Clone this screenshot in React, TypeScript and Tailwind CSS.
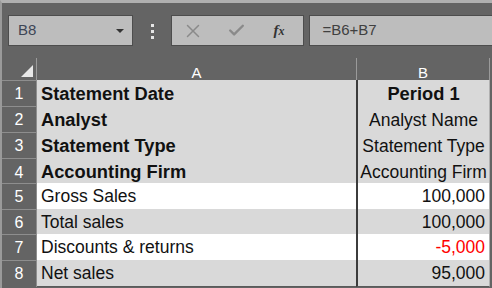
import { Check, X } from "lucide-react";

type Row = {
  n: number;
  a: string;
  b: string;
  h: string;
  aBold?: boolean;
  bBold?: boolean;
  center?: boolean;
  white?: boolean;
  red?: boolean;
  line?: boolean;
};

const ROWS: Row[] = [
  { n: 1, a: "Statement Date", b: "Period 1", h: "h-[26px]", aBold: true, bBold: true, center: true },
  { n: 2, a: "Analyst", b: "Analyst Name", h: "h-[26px]", aBold: true, center: true },
  { n: 3, a: "Statement Type", b: "Statement Type", h: "h-[26px]", aBold: true, center: true },
  { n: 4, a: "Accounting Firm", b: "Accounting Firm", h: "h-[25px]", aBold: true, center: true, line: true },
  { n: 5, a: "Gross Sales", b: "100,000", h: "h-[26px]", white: true, line: true },
  { n: 6, a: "Total sales", b: "100,000", h: "h-[25px]", line: true },
  { n: 7, a: "Discounts & returns", b: "-5,000", h: "h-[26px]", white: true, red: true, line: true },
  { n: 8, a: "Net sales", b: "95,000", h: "h-[25px]", line: true },
];

export default function App() {
  return (
    <div className="h-[288px] w-[492px] overflow-hidden border-l-2 border-t-[3px] border-l-[#9a9a9a] border-t-[#b0b0b0] bg-[#646464] font-['Liberation_Sans',Arial,sans-serif]">
      {/* Formula bar */}
      <div className="flex h-[55px] items-start pt-[12px]">
        <div className="ml-[6px] flex h-[31px] w-[125px] items-center justify-between border border-[#4d4d4d] bg-[#bdbdbd] pl-[9px] pr-[8px]">
          <span className="text-[15px] text-[#3d4656]">B8</span>
          <span className="h-0 w-0 border-x-[4px] border-t-[4px] border-x-transparent border-t-[#333]" />
        </div>
        <div className="ml-[18px] mt-[9px] flex flex-col gap-[3.5px]">
          <span className="h-[2.5px] w-[2.5px] bg-[#e6e6e6]" />
          <span className="h-[2.5px] w-[2.5px] bg-[#e6e6e6]" />
          <span className="h-[2.5px] w-[2.5px] bg-[#e6e6e6]" />
        </div>
        <div className="ml-[17px] flex h-[31px] w-[133px] items-center border border-[#4d4d4d] bg-[#bdbdbd]">
          <X className="ml-[10px] h-[22px] w-[22px] text-[#8a8a8a]" strokeWidth={1.6} />
          <Check className="ml-[23px] h-[19px] w-[19px] text-[#8a8a8a]" strokeWidth={3} />
          <span className="ml-[28px] font-['Liberation_Serif',serif] text-[15px] font-bold italic text-[#333]">
            f<span className="text-[12px]">x</span>
          </span>
        </div>
        <div className="ml-[5px] flex h-[31px] flex-1 items-center border border-r-0 border-[#4d4d4d] bg-[#bdbdbd] pl-[13px]">
          <span className="text-[15px] text-[#404040]">=B6+B7</span>
        </div>
      </div>

      {/* Column headers */}
      <div className="grid h-[22px] grid-cols-[35px_319px_134px] text-white">
        <div className="relative border-r border-[#9a9a9a]">
          <span className="absolute bottom-[3px] right-[3px] h-0 w-0 border-b-[12px] border-l-[12px] border-b-[#e8e8e8] border-l-transparent" />
        </div>
        <div className="flex items-end justify-center text-[15px] leading-none">A</div>
        <div className="flex items-end justify-center border-x border-[#9a9a9a] text-[15px] leading-none">B</div>
      </div>

      {/* Rows */}
      {ROWS.map((r) => (
        <div key={r.n} className={`grid grid-cols-[35px_319px_134px] ${r.h}`}>
          <div className="flex items-center justify-center border-r border-t border-[#8e8e8e] text-[16px] text-white">
            {r.n}
          </div>
          <div
            className={`flex items-center pl-[4px] text-[#111] ${r.white ? "bg-white" : "bg-[#d9d9d9]"} ${
              r.line ? "border-b border-[#5a5a5a]" : ""
            } ${r.aBold ? "text-[18.3px] font-bold" : "text-[17.5px]"}`}
          >
            {r.a}
          </div>
          <div
            className={`flex items-center border-l-2 border-r border-l-[#3c3c3c] border-r-[#b0b0b0] ${
              r.white ? "bg-white" : "bg-[#d9d9d9]"
            } ${r.line ? "border-b border-b-[#5a5a5a]" : ""} ${r.center ? "justify-center" : "justify-end pr-[4px]"} ${
              r.bBold ? "text-[18.3px] font-bold" : "text-[17.5px]"
            } ${r.red ? "text-[#ff0000]" : "text-[#111]"}`}
          >
            {r.b}
          </div>
        </div>
      ))}
    </div>
  );
}
